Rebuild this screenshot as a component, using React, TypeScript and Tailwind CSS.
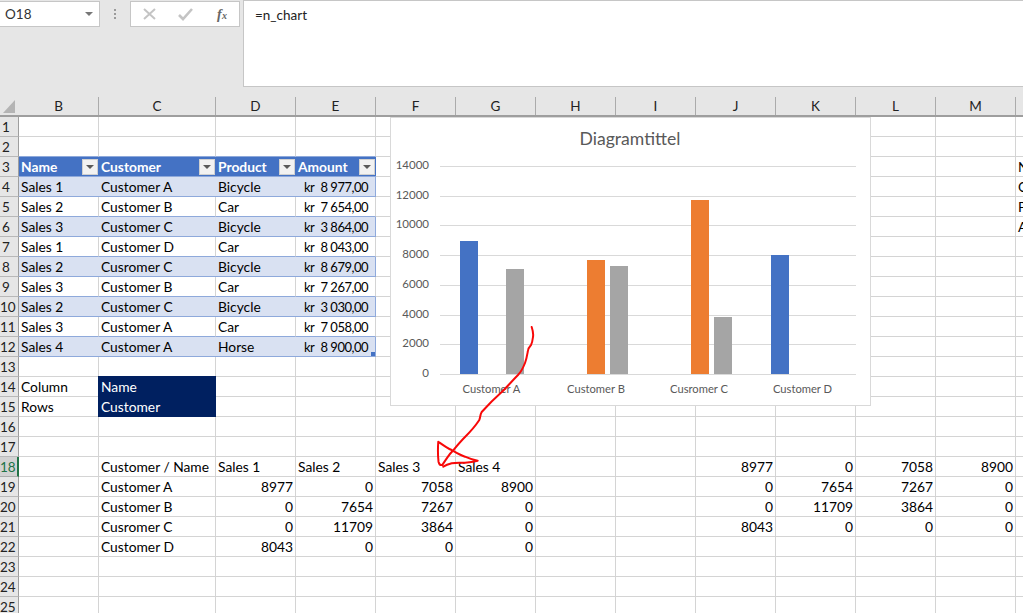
import React from "react";

const cols = ["B", "C", "D", "E", "F", "G", "H", "I", "J", "K", "L", "M", "N"];
const font = "font-['Lato','Liberation_Sans',sans-serif]";

type Cell = { t: string; r?: boolean };
const L = (t: string): Cell => ({ t });
const R = (t: string | number): Cell => ({ t: String(t), r: true });

const table: string[][] = [
  ["Sales 1", "Customer A", "Bicycle", "kr 8 977,00"],
  ["Sales 2", "Customer B", "Car", "kr 7 654,00"],
  ["Sales 3", "Customer C", "Bicycle", "kr 3 864,00"],
  ["Sales 1", "Customer D", "Car", "kr 8 043,00"],
  ["Sales 2", "Cusromer C", "Bicycle", "kr 8 679,00"],
  ["Sales 3", "Customer B", "Car", "kr 7 267,00"],
  ["Sales 2", "Customer C", "Bicycle", "kr 3 030,00"],
  ["Sales 3", "Customer A", "Car", "kr 7 058,00"],
  ["Sales 4", "Customer A", "Horse", "kr 8 900,00"],
];

const sideLetters: Record<number, string> = { 3: "Name", 4: "Customer", 5: "Product", 6: "Amount" };

const lower: Record<number, (Cell | null)[]> = {
  18: [null, L("Customer / Name"), L("Sales 1"), L("Sales 2"), L("Sales 3"), L("Sales 4"), null, null, R(8977), R(0), R(7058), R(8900)],
  19: [null, L("Customer A"), R(8977), R(0), R(7058), R(8900), null, null, R(0), R(7654), R(7267), R(0)],
  20: [null, L("Customer B"), R(0), R(7654), R(7267), R(0), null, null, R(0), R(11709), R(3864), R(0)],
  21: [null, L("Cusromer C"), R(0), R(11709), R(3864), R(0), null, null, R(8043), R(0), R(0), R(0)],
  22: [null, L("Customer D"), R(8043), R(0), R(0), R(0)],
};

const grid = "grid grid-cols-[19px_80px_117px_80px_80px_80px_80px_80px_80px_80px_80px_80px_80px_80px] h-5 w-[1036px]";
const cellBase = "h-5 border-r border-b border-[#d4d4d4] px-[2px] leading-[20px] whitespace-nowrap overflow-hidden text-[13.8px] text-black";

function RowHead({ n, active }: { n: number; active?: boolean }) {
  return (
    <div
      className={
        active
          ? "h-5 border-b border-r-2 border-b-[#ababab] border-r-[#217346] bg-[#d2d2d2] text-[#217346] text-center pr-[5px] text-[13.5px] leading-[20px] overflow-hidden"
          : "h-5 border-b border-r border-b-[#b8b8b8] border-r-[#9e9e9e] bg-[#e6e6e6] text-[#222] text-center pr-[6px] text-[13.5px] leading-[20px] overflow-hidden"
      }
    >
      {n}
    </div>
  );
}

function Filter() {
  return (
    <span className="absolute right-[1px] top-[2px] w-4 h-4 bg-[#f2f2f2] border border-[#d0d0d0] flex items-center justify-center">
      <span className="w-0 h-0 border-l-[4px] border-r-[4px] border-t-[4px] border-l-transparent border-r-transparent border-t-[#5a5a5a]" />
    </span>
  );
}

function Row({ n }: { n: number }) {
  let cells: React.ReactNode[] = [];
  if (n === 3) {
    const h = ["Name", "Customer", "Product", "Amount"];
    cells = h.map((t) => (
      <div key={t} className="relative h-5 bg-[#4472c4] border-b border-[#8ea9db] px-[2px] leading-[20px] text-white font-bold text-[13.8px] whitespace-nowrap overflow-hidden">
        {t}
        <Filter />
      </div>
    ));
  } else if (n >= 4 && n <= 12) {
    const row = table[n - 4];
    const band = n % 2 === 0;
    cells = row.map((t, i) => (
      <div
        key={i}
        className={`relative h-5 border-b border-b-[#8ea9db] leading-[20px] text-black whitespace-nowrap overflow-hidden ${
          band ? "bg-[#d9e1f2]" : "bg-white border-r border-r-[#d4d4d4]"
        } ${i === 3 ? "pl-2 pr-[7px] border-r border-r-[#8ea9db] text-[13px] tracking-[-0.5px]" : "px-[2px] text-[13.8px]"}`}
      >
        {i === 3 ? <span className="flex justify-between"><span>kr</span><span>{t.slice(3)}</span></span> : t}
        {n === 12 && i === 3 && <span className="absolute right-0 bottom-0 w-[4px] h-[4px] bg-[#4472c4]" />}
      </div>
    ));
  } else if (n === 2) {
    cells = cols.slice(0, 4).map((c) => (
      <div key={c} className="h-5 border-r border-b border-r-[#d4d4d4] border-b-[#8ea9db]" />
    ));
  } else if (n === 14 || n === 15) {
    cells = [
      <div key="a" className={cellBase}>{n === 14 ? "Column" : "Rows"}</div>,
      <div
        key="b"
        className={
          n === 14
            ? "h-[21px] -mt-px -ml-px pl-[3px] pt-px bg-[#002060] text-white leading-[20px] text-[13.8px]"
            : "h-5 -ml-px pl-[3px] bg-[#002060] text-white leading-[20px] text-[13.8px]"
        }
      >
        {n === 14 ? "Name" : "Customer"}
      </div>,
    ];
  }
  const start = cells.length;
  const values = lower[n] ?? [];
  const rest = cols.slice(start).map((c, i) => {
    const idx = start + i;
    const v = values[idx];
    let text: string | null = v ? v.t : null;
    const right = v?.r;
    if (c === "N" && sideLetters[n]) text = sideLetters[n];
    return (
      <div key={c} className={`${cellBase} ${right ? "text-right" : ""}`}>
        {text}
      </div>
    );
  });
  return (
    <div className={grid}>
      <RowHead n={n} active={n === 18} />
      {cells}
      {rest}
    </div>
  );
}

const yTicks = [14000, 12000, 10000, 8000, 6000, 4000, 2000, 0];
const y0 = 256;
const scale = 208 / 14000;
const yOf = (v: number) => y0 - v * scale;
const bars = [
  { x: 70, v: 8977, c: "#4472c4" },
  { x: 116, v: 7058, c: "#a5a5a5" },
  { x: 197, v: 7654, c: "#ed7d31" },
  { x: 220, v: 7267, c: "#a5a5a5" },
  { x: 301, v: 11709, c: "#ed7d31" },
  { x: 324, v: 3864, c: "#a5a5a5" },
  { x: 381, v: 8043, c: "#4472c4" },
];
const cats = [
  { x: 101.5, t: "Customer A" },
  { x: 206, t: "Customer B" },
  { x: 309, t: "Cusromer C" },
  { x: 412.5, t: "Customer D" },
];

function Chart() {
  return (
    <div className="absolute left-[390px] top-[117px] w-[481px] h-[289px] bg-white border border-[#d9d9d9]">
      <svg width="479" height="287" className="block" style={{ fontFamily: "Lato, sans-serif" }}>
        <text x="239" y="27" textAnchor="middle" fontSize="17.6" fill="#595959">Diagramtittel</text>
        {yTicks.map((v) => (
          <g key={v}>
            <line x1="49" x2="465" y1={Math.round(yOf(v)) + 0.5} y2={Math.round(yOf(v)) + 0.5} stroke="#d9d9d9" strokeWidth="1" />
            <text x="38" y={Math.round(yOf(v)) + 3} textAnchor="end" fontSize="11.5" fill="#595959">{v}</text>
          </g>
        ))}
        {bars.map((b) => (
          <rect key={b.x} x={b.x - 1} y={Math.round(yOf(b.v))} width="18" height={y0 - Math.round(yOf(b.v))} fill={b.c} />
        ))}
        {cats.map((c) => (
          <text key={c.t} x={c.x - 1} y="275" textAnchor="middle" fontSize="11.2" fill="#595959">{c.t}</text>
        ))}
      </svg>
    </div>
  );
}

export default function App() {
  const rows = Array.from({ length: 25 }, (_, i) => i + 1);
  return (
    <div className={`relative w-[1023px] h-[613px] overflow-hidden bg-white ${font}`}>
      <div className="flex h-[97px] bg-[#e6e6e6]">
        <div className="flex items-start w-[243px] pt-[1px] shrink-0">
          <div className="w-[100px] h-[26px] bg-white border-y border-r border-[#c6c6c6] flex items-center justify-between pl-[5px] pr-[6px] text-[13.5px] text-[#333]">
            <span>O18</span>
            <span className="w-0 h-0 border-l-[4px] border-r-[4px] border-t-[4px] border-l-transparent border-r-transparent border-t-[#777]" />
          </div>
          <div className="w-[30px] h-[26px] flex flex-col items-center justify-center gap-[2px]">
            <span className="w-[2px] h-[2px] bg-[#9a9a9a]" />
            <span className="w-[2px] h-[2px] bg-[#9a9a9a]" />
            <span className="w-[2px] h-[2px] bg-[#9a9a9a]" />
          </div>
          <div className="w-[110px] h-[26px] bg-white border border-[#c6c6c6] flex items-center">
            <svg width="108" height="24" viewBox="0 0 108 24">
              <path d="M13 7 L24 17 M24 7 L13 17" stroke="#c4c4c4" strokeWidth="2" fill="none" />
              <path d="M48 13 L52 17 L61 7" stroke="#c4c4c4" strokeWidth="2.6" fill="none" />
              <text x="86" y="17" fontFamily="Liberation Serif, serif" fontStyle="italic" fontWeight="bold" fontSize="14" fill="#666">f</text>
              <text x="91" y="17" fontFamily="Liberation Serif, serif" fontStyle="italic" fontWeight="bold" fontSize="10" fill="#666">x</text>
            </svg>
          </div>
        </div>
        <div className="flex-1 h-[87px] bg-white border-l border-b border-t border-[#c6c6c6] pl-[11px] pt-[4px] text-[13.5px] text-[#222] leading-[20px]">
          =n_chart
        </div>
      </div>
      <div className="grid grid-cols-[19px_80px_117px_80px_80px_80px_80px_80px_80px_80px_80px_80px_80px_80px] h-5 w-[1036px] bg-[#e6e6e6] border-b-2 border-[#9e9e9e]">
        <div className="relative">
          <svg width="18" height="18" className="absolute left-0 top-0"><path d="M15 3 L15 16 L3 16 Z" fill="#b4b4b4" /></svg>
        </div>
        {cols.map((c) => (
          <div key={c} className="border-r border-[#ababab] text-center text-[13.5px] leading-[18px] text-[#222]">
            {c}
          </div>
        ))}
      </div>
      {rows.map((n) => (
        <Row key={n} n={n} />
      ))}
      <Chart />
      <svg className="absolute left-0 top-0 pointer-events-none" width="1023" height="613">
        <path
          d="M531.7 327 C533 331 533.5 334 533 337 C532.5 341 532 343 531 345 C529 347 528 349 527.7 352 C527 356 526.5 359 525 363 C523 368 521 372 518 375 C512 381 507 387 501.7 392 C495 398 488 405 481.7 412 C480 415 480.5 417 479.3 420 C476 425 471 431 465 437 C460 442 456 447 451.7 452 C448 456 445 461 442.3 465 C440 465.5 439 464 438.5 461.7 C437.8 455 437.8 448 438.3 441.7 C443 445 447 448 451.7 450 C456 452.5 460 455 465 456.7 C469 458.5 473 460 477.7 460.7 C473 462 469 462.5 465 462.7 C460 463 456 462.5 451.7 463.3 C449 464 446 465 443.3 466.7"
          fill="none"
          stroke="#f80808"
          strokeWidth="2"
          strokeLinecap="round"
          strokeLinejoin="round"
        />
      </svg>
    </div>
  );
}
